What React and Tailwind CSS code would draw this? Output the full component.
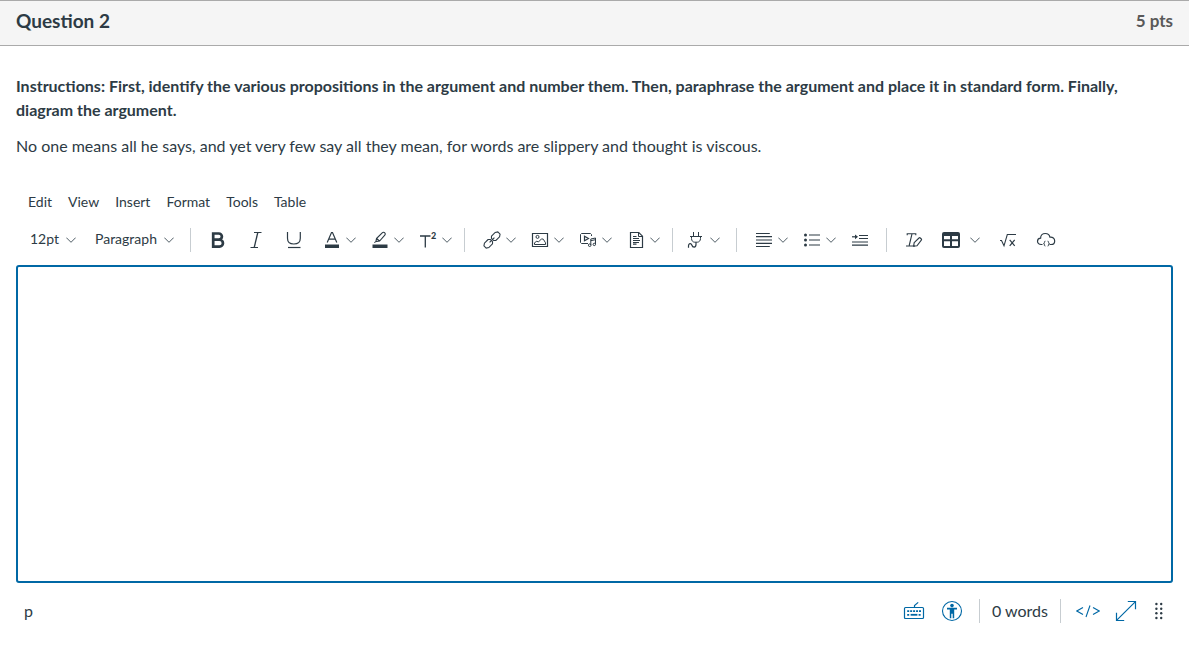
import {useState} from "react";

const menus = ["Edit", "View", "Insert", "Format", "Tools", "Table"];

function Icon({children, className = "size-6"}) {
	return (
		<svg
			viewBox="0 0 24 24"
			className={`${className} shrink-0`}
			fill="none"
			stroke="currentColor"
			strokeWidth="1"
			aria-hidden="true"
		>
			{children}
		</svg>
	);
}

function Chevron() {
	return (
		<svg viewBox="0 0 10 10" className="size-2.5 shrink-0" fill="none" stroke="#4f5c65" aria-hidden="true">
			<path d="M0.3 2.6 5 7.3 9.7 2.6" strokeWidth="1" />
		</svg>
	);
}

const BoldIcon = () => (
	<Icon>
		<path d="M7.2 5.5h5.6a3 3 0 0 1 0 6.2H7.2zM7.2 11.7h6.3a3.4 3.4 0 0 1 0 6.9H7.2z" strokeWidth="2.7" />
	</Icon>
);

const ItalicIcon = () => (
	<Icon>
		<path d="M10 4.5h7.5M6.5 19.5h7.5" />
		<path d="M13.8 4.5 10.2 19.5" strokeWidth="1.3" />
	</Icon>
);

const UnderlineIcon = () => (
	<Icon>
		<path d="M5.5 4v6.2c0 3.8 2.6 5.8 6.3 5.8s6.5-2 6.5-5.8V4" strokeWidth="1.2" />
		<path d="M6 19.5h12.5" strokeWidth="1.2" />
	</Icon>
);

const TextColorIcon = () => (
	<Icon>
		<path d="M7.2 14.5 11.5 4.5h1l4.3 10M8.7 11.2h6.6" strokeWidth="1.2" />
		<path d="M5 16.5h14v3.5H5z" fill="currentColor" stroke="none" />
	</Icon>
);

const HighlightIcon = () => (
	<Icon>
		<path d="M8.5 10.5 14.2 4.8c.9-.9 2-.6 2.6 0s.7 1.6 0 2.4L11.6 13l-3.7.5zM8.5 10.5l3.1 2.5M6.3 14.6l2-1.2" strokeWidth="1.1" />
		<path d="M4.5 16.5h15v3.5h-15z" fill="currentColor" stroke="none" />
	</Icon>
);

const SuperscriptIcon = () => (
	<Icon>
		<path d="M4 8h10.5M9.3 8v11.5" strokeWidth="1.3" />
		<text x="15" y="11" fontSize="9" fontWeight="900" fontFamily="Lato, sans-serif" fill="currentColor" stroke="none">2</text>
	</Icon>
);

const LinkIcon = () => (
	<Icon>
		<g transform="rotate(-45 12 12)" strokeWidth="1.1">
			<path d="M9.6 8.9H4.4L2.2 10.4v3.2l2.2 1.5h5.2l1.6-1.5v-3.2z" />
			<path d="M14.4 8.9h5.2l2.2 1.5v3.2l-2.2 1.5h-5.2l-1.6-1.5v-3.2z" />
			<path d="M8.6 12h6.8" />
		</g>
	</Icon>
);

const ImageIcon = () => (
	<Icon>
		<path d="M4.5 5.5h15v13h-15z" strokeWidth="1.2" />
		<circle cx="9.5" cy="8.9" r="1.5" />
		<path d="M6.5 16.5v-1.7l2.3-1.6 1.6.8 3.2-3.2 1.8.5 2.1 3.5v1.7z" />
	</Icon>
);

const MediaIcon = () => (
	<Icon>
		<path d="M15.5 8V6.5L14.5 5.5h-9l-1 1v8l1 1H12" />
		<path d="M8.5 8.2v4.6l4-2.3z" strokeWidth="1.2" />
		<path d="M14.8 17V11l4.7-1v6.3M14.8 12.7l4.7-1" />
		<circle cx="13.7" cy="17.2" r="1.3" />
		<circle cx="18.3" cy="16.4" r="1.2" />
	</Icon>
);

const DocumentIcon = () => (
	<Icon>
		<path d="M6.5 4.5h8.3l3.7 3.7v11.3h-12z" strokeWidth="1.2" />
		<path d="M14.5 4.5v4h4" />
		<path d="M9 8.5h3.5M9 10.5h6M9 12.5h7M9 14.5h6M9 16.2h3.5" strokeWidth="1.2" />
	</Icon>
);

const PlugIcon = () => (
	<Icon>
		<path d="M11.5 4v4M16.5 4v4M8 8.5h12M9.5 8.5v2c0 2.4 1.6 3.7 3.2 3.7h2.6c1.6 0 3.2-1.3 3.2-3.7v-2" />
		<path d="M14 14.2v2.1c0 3.8-3.4 3.4-4.2.7-.8-2.3-3.3-1.6-3.3.8v2" strokeWidth="1.2" />
	</Icon>
);

const AlignIcon = () => (
	<Icon>
		<path d="M4 5.5h13.8M4 18.5h13.8" strokeWidth="1.2" />
		<path d="M4 8.7h16M4 12h16M4 15.3h16" strokeWidth="1.2" />
	</Icon>
);

const BulletsIcon = () => (
	<Icon>
		<path d="M9 7h11M9 12h11M9 17h11" strokeWidth="1.2" />
		<g fill="currentColor" stroke="none">
			<circle cx="5.5" cy="7" r="1.5" />
			<circle cx="5.5" cy="12" r="1.5" />
			<circle cx="5.5" cy="17" r="1.5" />
		</g>
	</Icon>
);

const IndentIcon = () => (
	<Icon>
		<path d="M11 7.5h9M11 10.5h9M4 14h16M4 17.2h16" strokeWidth="1.2" />
		<path d="M4 8.8h4.5" strokeWidth="1.2" />
		<path d="m7 6.4 3 2.4-3 2.4z" fill="currentColor" stroke="none" />
	</Icon>
);

const ClearFormatIcon = () => (
	<Icon>
		<path d="M5.2 7.2V5.8h8.6v1.4M10 5.8 7.2 17.5M4 18h9" strokeWidth="1.1" />
		<path d="m12.2 14.6 4.8-4.6c.4-.4.9-.4 1.3 0l1 1c.4.4.4.8 0 1.2L15 17.8l-3.4.4z" strokeWidth="1.1" />
	</Icon>
);

const TableIcon = () => (
	<Icon>
		<path
			fill="currentColor"
			stroke="none"
			fillRule="evenodd"
			d="M5 4h14a2 2 0 0 1 2 2v12a2 2 0 0 1-2 2H5a2 2 0 0 1-2-2V6a2 2 0 0 1 2-2zM5 8v3.3h6V8zM13 8v3.3h6V8zM5 13.3V18h6v-4.7zM13 13.3V18h6v-4.7z"
		/>
	</Icon>
);

const EquationIcon = () => (
	<Icon>
		<path d="M4 12.5h1.5L8 17.8 11.3 6.5H20" strokeWidth="1.1" />
		<path d="m13.7 11.8 5 6M18.7 11.8l-5 6" strokeWidth="1.2" />
	</Icon>
);

const CloudIcon = () => (
	<Icon>
		<path d="M8.5 16.5H7.2c-2.2 0-3.7-1.3-3.7-3.2 0-1.8 1.4-3 3.1-3.1 0-2.8 2-4.7 4.7-4.7 2.5 0 4.2 1.6 4.6 3.7 2.8-.4 4.8 1.3 4.8 3.7 0 2.2-1.7 3.6-3.7 3.6h-1.5" strokeWidth="1.2" />
		<path d="M11.4 13.2c-1.2 0-1 .8-1 1.5 0 .6-.3.8-.8.9.5.1.8.3.8.9 0 .8-.2 1.5 1 1.5M13.6 13.2c1.2 0 1 .8 1 1.5 0 .6.3.8.8.9-.5.1-.8.3-.8.9 0 .8.2 1.5-1 1.5" />
	</Icon>
);

function ToolButton({label, children}) {
	return (
		<button type="button" aria-label={label} className="flex h-[34px] w-[38px] items-center justify-center">
			{children}
		</button>
	);
}

function SplitButton({label, children}) {
	return (
		<button type="button" aria-label={label} className="flex h-[34px] w-12 items-center gap-[2px] pl-[7px]">
			{children}
			<Chevron />
		</button>
	);
}

function Group({children, last}) {
	return (
		<div className={`flex h-6 items-center pr-[7px] pl-2 ${last ? "" : "border-r border-[#c7cdd1]"}`}>
			{children}
		</div>
	);
}

function ToolSelect({label, options, className}) {
	return (
		<label className={`grid items-center ${className}`}>
			<select
				aria-label={label}
				className="col-start-1 row-start-1 h-6 w-full appearance-none bg-transparent pb-[2px] text-sm"
			>
				{options.map((option) => (
					<option key={option}>{option}</option>
				))}
			</select>
			<span className="pointer-events-none col-start-1 row-start-1 justify-self-end">
				<Chevron />
			</span>
		</label>
	);
}

function Toolbar() {
	return (
		<div className="flex flex-wrap items-center">
			<div className="flex h-6 items-center gap-[18px] border-r border-[#c7cdd1] pr-4 pl-[14px]">
				<ToolSelect label="Font size" options={["12pt", "14pt", "18pt"]} className="w-[46px]" />
				<ToolSelect label="Blocks" options={["Paragraph", "Heading 2"]} className="ml-px w-[79px]" />
			</div>
			<Group>
				<ToolButton label="Bold"><BoldIcon /></ToolButton>
				<ToolButton label="Italic"><ItalicIcon /></ToolButton>
				<ToolButton label="Underline"><UnderlineIcon /></ToolButton>
				<SplitButton label="Text color"><TextColorIcon /></SplitButton>
				<SplitButton label="Background color"><HighlightIcon /></SplitButton>
				<SplitButton label="Superscript and subscript"><SuperscriptIcon /></SplitButton>
			</Group>
			<Group>
				<SplitButton label="Links"><LinkIcon /></SplitButton>
				<SplitButton label="Images"><ImageIcon /></SplitButton>
				<SplitButton label="Record and upload media"><MediaIcon /></SplitButton>
				<SplitButton label="Documents"><DocumentIcon /></SplitButton>
			</Group>
			<Group>
				<button type="button" aria-label="Apps" className="flex h-[34px] w-12 items-center gap-1 pl-px">
					<PlugIcon />
					<Chevron />
				</button>
			</Group>
			<Group>
				<SplitButton label="Align"><AlignIcon /></SplitButton>
				<SplitButton label="Lists"><BulletsIcon /></SplitButton>
				<ToolButton label="Increase indent"><IndentIcon /></ToolButton>
			</Group>
			<Group last>
				<ToolButton label="Clear formatting"><ClearFormatIcon /></ToolButton>
				<button type="button" aria-label="Insert table" className="flex h-[34px] w-14 items-center gap-[7px] pl-[6px]">
					<TableIcon />
					<Chevron />
				</button>
				<ToolButton label="Insert math equation"><EquationIcon /></ToolButton>
				<ToolButton label="Embed"><CloudIcon /></ToolButton>
			</Group>
		</div>
	);
}

function StatusBar({words}) {
	return (
		<div className="mt-4 flex items-center justify-between px-2">
			<span>p</span>
			<div className="flex h-6 items-center text-[#0068a5]">
				<button type="button" aria-label="View keyboard shortcuts" className="mr-[14px]">
					<Icon>
						<path d="M3.5 8.5h17c.6 0 1 .4 1 1v9c0 .6-.4 1-1 1h-17c-.6 0-1-.4-1-1v-9c0-.6.4-1 1-1zM12.5 8.5V6.6L16.2 3.4" strokeWidth="1.2" />
						<path d="M5.2 12.2h14M5.2 15.8h2.6M16.6 15.8h2.6" strokeWidth="1.8" strokeDasharray="2 0.95" />
						<path d="M8.6 15.8h6.8" strokeWidth="1.8" />
					</Icon>
				</button>
				<button type="button" aria-label="Accessibility checker" className="mr-[15px]">
					<Icon>
						<circle cx="12" cy="12" r="9.5" strokeWidth="1.1" />
						<circle cx="12" cy="6.6" r="1.8" fill="currentColor" stroke="none" />
						<path d="M7 8.8h10v1.6h-2.8v8.8h-1.5v-4.4h-1.4v4.4H9.8v-8.8H7z" fill="currentColor" stroke="none" />
					</Icon>
				</button>
				<span className="flex h-6 items-center border-x border-[#c7cdd1] px-3 text-[#2d3b45]">
					{words} words
				</span>
				<button type="button" aria-label="Switch to the html editor" className="mr-[14px] ml-[15px]">
					<Icon>
						<path d="m7 8.5-6.2 3.5 6.2 3.5M17 8.5l6.2 3.5-6.2 3.5M14 6.5 10 18" strokeWidth="1.1" />
					</Icon>
				</button>
				<button type="button" aria-label="Fullscreen" className="mr-4">
					<Icon>
						<path d="M2.8 21.2 21.2 2.8M13.8 2.5h7.7v7.7M2.5 13.8v7.7h7.7" strokeWidth="1.2" />
					</Icon>
				</button>
				<button type="button" aria-label="Resize" className="text-[#2d3b45]">
					<svg viewBox="0 0 11 18" className="h-[18px] w-[11px]" fill="currentColor" aria-hidden="true">
						{[2, 6.7, 11.3, 16].map((y) => (
							<g key={y}>
								<circle cx="2.4" cy={y} r="1.2" />
								<circle cx="7.2" cy={y} r="1.2" />
							</g>
						))}
					</svg>
				</button>
			</div>
		</div>
	);
}

function App() {
	const [answer, setAnswer] = useState("");
	const words = answer.trim() ? answer.trim().split(/\s+/).length : 0;

	return (
		<div className="bg-white font-['Lato',sans-serif] text-base text-[#2d3b45]">
			<header className="flex items-center justify-between border-y border-[#aaaaaa] bg-[#f5f5f5] px-4 pt-2 pb-3">
				<h1 className="text-[19px] leading-6 font-bold">Question 2</h1>
				<span className="text-[17px] leading-6 font-bold text-[#595959]">5 pts</span>
			</header>
			<main className="px-4 pt-7">
				<p className="font-bold">
					Instructions: First, identify the various propositions in the argument and number them. Then, paraphrase
					the argument and place it in standard form. Finally, diagram the argument.
				</p>
				<p className="mt-3">
					No one means all he says, and yet very few say all they mean, for words are slippery and thought is
					viscous.
				</p>
				<nav className="mt-8 flex gap-4 px-3 text-sm leading-6">
					{menus.map((menu) => (
						<button type="button" key={menu}>
							{menu}
						</button>
					))}
				</nav>
				<div className="mt-[14px] mb-[13px]">
					<Toolbar />
				</div>
				<textarea
					aria-label="Answer"
					value={answer}
					onChange={(e) => setAnswer(e.target.value)}
					className="block h-[318px] w-full resize-none rounded-[3px] border-2 border-[#0068a5] p-2.5 outline-none"
				/>
				<StatusBar words={words} />
			</main>
		</div>
	);
}

export default App;
